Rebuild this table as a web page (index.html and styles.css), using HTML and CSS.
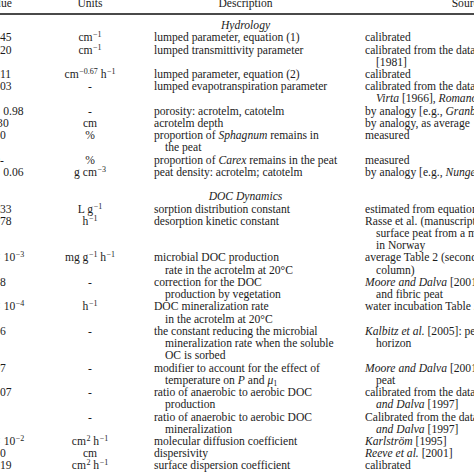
FILE: index.html
```html
<!DOCTYPE html>
<html>
<head>
<meta charset="utf-8">
<link rel="stylesheet" href="styles.css">
</head>
<body>
<table class="tbl">
  <colgroup>
    <col class="c-val"><col class="c-unit"><col class="c-desc"><col class="c-src">
  </colgroup>
  <thead>
    <tr class="head">
      <th class="val">Value</th>
      <th class="unit">Units</th>
      <th class="desc-h">Description</th>
      <th class="src-h">Source</th>
    </tr>
  </thead>
  <tbody>
    <tr class="sec first"><td></td><td></td><td class="sec-t"><i>Hydrology</i></td><td></td></tr>
    <tr><td class="val">0.045</td><td class="unit">cm<sup>−1</sup></td><td><span class="ln">lumped parameter, equation (1)</span></td><td><span class="ln">calibrated</span></td></tr>
    <tr><td class="val">0.020</td><td class="unit">cm<sup>−1</sup></td><td><span class="ln">lumped transmittivity parameter</span></td><td><span class="ln">calibrated from the data of Ivanov</span><span class="ln c">[1981]</span></td></tr>
    <tr><td class="val">0.011</td><td class="unit">cm<sup>−0.67</sup> h<sup>−1</sup></td><td><span class="ln">lumped parameter, equation (2)</span></td><td><span class="ln">calibrated</span></td></tr>
    <tr><td class="val">0.003</td><td class="unit">-</td><td><span class="ln">lumped evapotranspiration parameter</span></td><td><span class="ln">calibrated from the data of</span><span class="ln c"><i>Virta</i> [1966], <i>Romanov</i> [1968]</span></td></tr>
    <tr><td class="val">10; 0.98</td><td class="unit">-</td><td><span class="ln">porosity: acrotelm, catotelm</span></td><td><span class="ln">by analogy [e.g., <i>Granberg et al.</i>, 1999]</span></td></tr>
    <tr><td class="val">5–30</td><td class="unit">cm</td><td><span class="ln">acrotelm depth</span></td><td><span class="ln">by analogy, as average</span></td></tr>
    <tr><td class="val">0.50</td><td class="unit">%</td><td><span class="ln">proportion of <i>Sphagnum</i> remains in</span><span class="ln c">the peat</span></td><td><span class="ln">measured</span></td></tr>
    <tr><td class="val">0.0-</td><td class="unit">%</td><td><span class="ln">proportion of <i>Carex</i> remains in the peat</span></td><td><span class="ln">measured</span></td></tr>
    <tr><td class="val">10; 0.06</td><td class="unit">g cm<sup>−3</sup></td><td><span class="ln">peat density: acrotelm; catotelm</span></td><td><span class="ln">by analogy [e.g., <i>Nungesser</i>, 2003]</span></td></tr>
    <tr class="sec"><td></td><td></td><td class="sec-t"><i>DOC Dynamics</i></td><td></td></tr>
    <tr><td class="val">0.033</td><td class="unit">L g<sup>−1</sup></td><td><span class="ln">sorption distribution constant</span></td><td><span class="ln">estimated from equation (9)</span></td></tr>
    <tr><td class="val">0.078</td><td class="unit">h<sup>−1</sup></td><td><span class="ln">desorption kinetic constant</span></td><td><span class="ln">Rasse et al. (manuscript in preparation):</span><span class="ln c">surface peat from a mire</span><span class="ln c">in Norway</span></td></tr>
    <tr><td class="val">2 × 10<sup>−3</sup></td><td class="unit">mg g<sup>−1</sup> h<sup>−1</sup></td><td><span class="ln">microbial DOC production</span><span class="ln c">rate in the acrotelm at 20°C</span></td><td><span class="ln">average Table 2 (second</span><span class="ln c">column)</span></td></tr>
    <tr><td class="val">0.08</td><td class="unit">-</td><td><span class="ln">correction for the DOC</span><span class="ln c">production by vegetation</span></td><td><span class="ln"><i>Moore and Dalva</i> [2001]: sapric</span><span class="ln c">and fibric peat</span></td></tr>
    <tr><td class="val">2 × 10<sup>−4</sup></td><td class="unit">h<sup>−1</sup></td><td><span class="ln">DOC mineralization rate</span><span class="ln c">in the acrotelm at 20°C</span></td><td><span class="ln">water incubation Table 2</span></td></tr>
    <tr><td class="val">0.06</td><td class="unit">-</td><td><span class="ln">the constant reducing the microbial</span><span class="ln c">mineralization rate when the soluble</span><span class="ln c">OC is sorbed</span></td><td><span class="ln"><i>Kalbitz et al.</i> [2005]: peat</span><span class="ln c">horizon</span></td></tr>
    <tr><td class="val">0.07</td><td class="unit">-</td><td><span class="ln">modifier to account for the effect of</span><span class="ln c">temperature on <i>P</i> and <i>μ</i><sub>1</sub></span></td><td><span class="ln"><i>Moore and Dalva</i> [2001]: fibric</span><span class="ln c">peat</span></td></tr>
    <tr><td class="val">0.007</td><td class="unit">-</td><td><span class="ln">ratio of anaerobic to aerobic DOC</span><span class="ln c">production</span></td><td><span class="ln">calibrated from the data of <i>Moore</i></span><span class="ln c"><i>and Dalva</i> [1997]</span></td></tr>
    <tr><td class="val">0.1</td><td class="unit">-</td><td><span class="ln">ratio of anaerobic to aerobic DOC</span><span class="ln c">mineralization</span></td><td><span class="ln">Calibrated from the data of <i>Moore</i></span><span class="ln c"><i>and Dalva</i> [1997]</span></td></tr>
    <tr><td class="val">2 × 10<sup>−2</sup></td><td class="unit">cm<sup>2</sup> h<sup>−1</sup></td><td><span class="ln">molecular diffusion coefficient</span></td><td><span class="ln"><i>Karlström</i> [1995]</span></td></tr>
    <tr><td class="val">0.50</td><td class="unit">cm</td><td><span class="ln">dispersivity</span></td><td><span class="ln"><i>Reeve et al.</i> [2001]</span></td></tr>
    <tr><td class="val">0.019</td><td class="unit">cm<sup>2</sup> h<sup>−1</sup></td><td><span class="ln">surface dispersion coefficient</span></td><td><span class="ln">calibrated</span></td></tr>
  </tbody>
</table>
</body>
</html>
```

FILE: styles.css
```css
html, body {
  margin: 0;
  padding: 0;
  background: #ffffff;
  overflow: hidden;
}

body {
  width: 474px;
  height: 474px;
  font-family: "Liberation Serif", "Times New Roman", serif;
  font-size: 11.6px;
  line-height: 12.24px;
  color: #1c1c1c;
}

.tbl {
  border-collapse: collapse;
  border-spacing: 0;
  table-layout: fixed;
  width: 585px;
  margin-left: -14.5px;
  margin-top: -2px;
}

.c-val { width: 64.5px; }
.c-unit { width: 104px; }
.c-desc { width: 211px; }
.c-src { width: 205.5px; }

.tbl th,
.tbl td {
  padding: 0;
  vertical-align: top;
  white-space: nowrap;
  font-weight: normal;
  text-align: left;
}

.head th {
  padding-bottom: 3px;
  border-bottom: 2px solid #4a4a4a;
}

.tbl th.val { text-align: left; }

.tbl .unit {
  text-align: center;
  padding-right: 24px;
}

.tbl th.desc-h {
  text-align: center;
  padding-right: 28px;
}

.tbl th.src-h {
  text-align: center;
}

.sec.first td {
  padding-top: 4.8px;
}

.sec td {
  padding-top: 12.24px;
}

.tbl td.sec-t {
  text-align: center;
  padding-right: 28px;
}

.ln {
  display: block;
}

.ln.c {
  padding-left: 11px;
}

sup {
  font-size: 8px;
  line-height: 0;
  vertical-align: 4px;
  margin-left: 0.5px;
}

sub {
  font-size: 8px;
  line-height: 0;
  vertical-align: -2px;
}
```
